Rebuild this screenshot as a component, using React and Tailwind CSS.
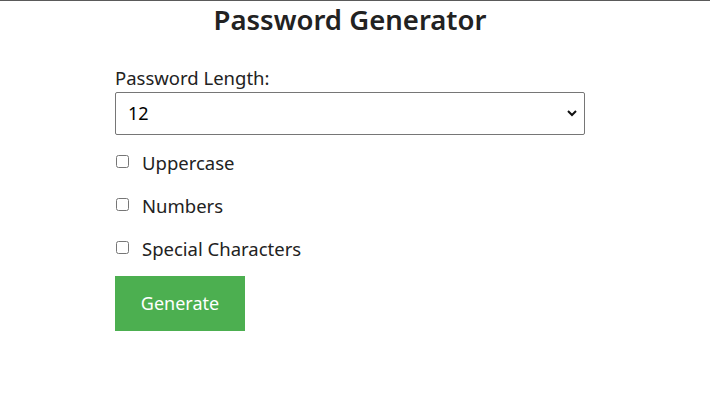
import React, { useState } from 'react';

const OPTIONS = ['Uppercase', 'Numbers', 'Special Characters'];

const App = () => {
  const [length, setLength] = useState('12');
  const [checked, setChecked] = useState({});

  return (
    <div className="min-h-[405px] w-full bg-white border-t border-[#5a5a5a] text-[#222] font-['Noto_Sans','Open_Sans',sans-serif]">
      <div className="w-[700px] flex flex-col items-center">
        <h1 className="mt-[1px] text-[27.5px] leading-[36px] font-semibold text-[#222]">Password Generator</h1>

        <div className="w-[470px] mt-[28px] flex flex-col">
          <label className="text-[18.5px] leading-[24px] text-[#222]">Password Length:</label>
          <div className="relative mt-[2px]">
            <select
              value={length}
              onChange={(e) => setLength(e.target.value)}
              className="w-full h-[43px] appearance-none border border-[#767676] rounded-[2px] bg-white pl-[12px] text-[18px] text-black outline-none"
            >
              {[8, 10, 12, 14, 16, 20].map((n) => (
                <option key={n} value={n}>{n}</option>
              ))}
            </select>
            <svg className="absolute right-[7px] top-[16px] pointer-events-none" width="12" height="10" viewBox="0 0 12 10">
              <path d="M2 3 L6 7 L10 3" fill="none" stroke="#111" strokeWidth="2" />
            </svg>
          </div>

          <div className="mt-[16px] flex flex-col gap-[19px]">
            {OPTIONS.map((opt) => (
              <label key={opt} className="flex items-center h-[24px] text-[18.5px] text-[#222]">
                <input
                  type="checkbox"
                  checked={!!checked[opt]}
                  onChange={() => setChecked({ ...checked, [opt]: !checked[opt] })}
                  className="w-[13px] h-[13px] ml-[1px] mr-[13px] mb-[4px]"
                />
                {opt}
              </label>
            ))}
          </div>

          <div className="mt-[15px]">
            <button className="w-[130px] h-[55px] bg-[#4caf50] text-white text-[18px]">Generate</button>
          </div>
        </div>
      </div>
    </div>
  );
};

export default App;
